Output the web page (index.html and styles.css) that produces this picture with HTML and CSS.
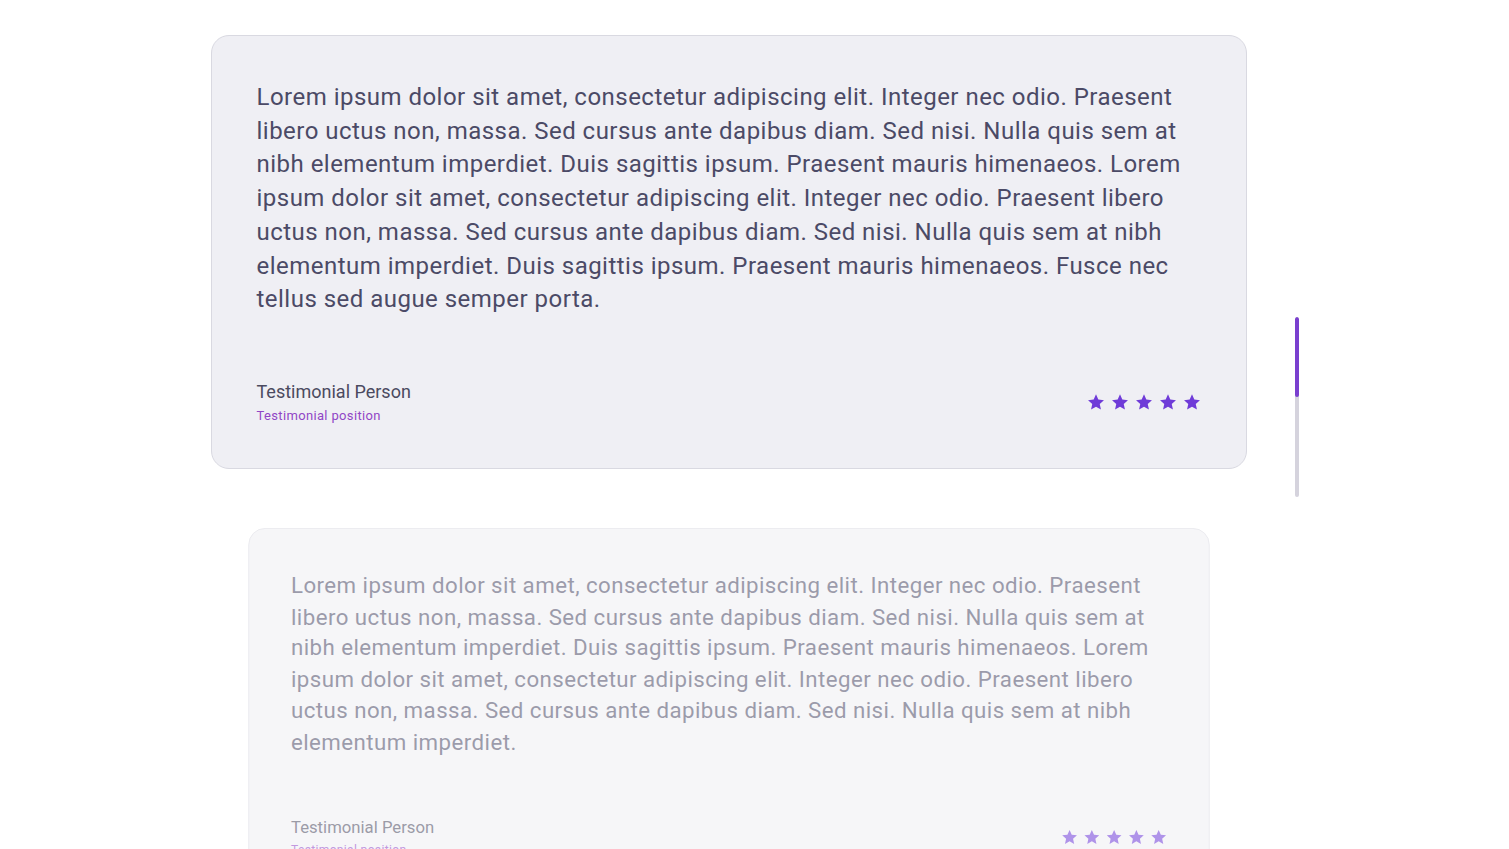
FILE: index.html
```html
<!doctype html>
<html lang="en">
<head>
  <meta charset="UTF-8">
  <meta name="viewport" content="width=device-width, initial-scale=1.0">
  <title>Testimonials</title>
  <link rel="stylesheet" href="styles.css">
</head>
<body>
  <svg width="0" height="0" class="defs">
    <symbol id="star" viewBox="0 0 24 24">
      <path d="M12 1.8l3.1 6.9 7.5.8-5.6 5.1 1.6 7.4L12 18.2 5.4 22l1.6-7.4-5.6-5.1 7.5-.8z"/>
    </symbol>
  </svg>

  <div class="testimonials">
    <div class="slides">
      <div class="card active">
        <p class="quote">Lorem ipsum dolor sit amet, consectetur adipiscing elit. Integer nec odio. Praesent libero uctus non, massa. Sed cursus ante dapibus diam. Sed nisi. Nulla quis sem at nibh elementum imperdiet. Duis sagittis ipsum. Praesent mauris himenaeos. Lorem ipsum dolor sit amet, consectetur adipiscing elit. Integer nec odio. Praesent libero uctus non, massa. Sed cursus ante dapibus diam. Sed nisi. Nulla quis sem at nibh elementum imperdiet. Duis sagittis ipsum. Praesent mauris himenaeos. Fusce nec tellus sed augue semper porta.</p>
        <div class="card-foot">
          <div class="person">
            <div class="name">Testimonial Person</div>
            <div class="position">Testimonial position</div>
          </div>
          <div class="stars">
            <svg><use href="#star"/></svg>
            <svg><use href="#star"/></svg>
            <svg><use href="#star"/></svg>
            <svg><use href="#star"/></svg>
            <svg><use href="#star"/></svg>
          </div>
        </div>
      </div>

      <div class="card next">
        <p class="quote">Lorem ipsum dolor sit amet, consectetur adipiscing elit. Integer nec odio. Praesent libero uctus non, massa. Sed cursus ante dapibus diam. Sed nisi. Nulla quis sem at nibh elementum imperdiet. Duis sagittis ipsum. Praesent mauris himenaeos. Lorem ipsum dolor sit amet, consectetur adipiscing elit. Integer nec odio. Praesent libero uctus non, massa. Sed cursus ante dapibus diam. Sed nisi. Nulla quis sem at nibh elementum imperdiet.</p>
        <div class="card-foot">
          <div class="person">
            <div class="name">Testimonial Person</div>
            <div class="position">Testimonial position</div>
          </div>
          <div class="stars">
            <svg><use href="#star"/></svg>
            <svg><use href="#star"/></svg>
            <svg><use href="#star"/></svg>
            <svg><use href="#star"/></svg>
            <svg><use href="#star"/></svg>
          </div>
        </div>
      </div>
    </div>

    <div class="progress">
      <div class="progress-bar"></div>
    </div>
  </div>
</body>
</html>
```

FILE: styles.css
```css
* {
  margin: 0;
  padding: 0;
  box-sizing: border-box;
}
html, body {
  height: 100%;
  overflow: hidden;
}
body {
  background-color: #fff;
  font-family: Roboto, "Liberation Sans", sans-serif;
  color: #4b4a66;
}
.defs {
  position: absolute;
}
.testimonials {
  display: flex;
  justify-content: center;
  align-items: flex-start;
  gap: 48px;
  padding-top: 35px;
}
.slides {
  width: 1036px;
}
.card {
  background-color: #efeff4;
  border: 1px solid #d9d9e1;
  border-radius: 18px;
  padding: 45px 45px 43px;
}
.card.next {
  margin-top: 59px;
  transform: scale(.928);
  transform-origin: top center;
  opacity: .55;
}
.quote {
  font-size: 24px;
  line-height: 33.7px;
  letter-spacing: .48px;
}
.card-foot {
  display: flex;
  justify-content: space-between;
  align-items: center;
  margin-top: 62px;
}
.name {
  font-size: 18px;
  line-height: 25px;
  color: #4b4a5f;
}
.position {
  margin-top: 3px;
  font-size: 13px;
  line-height: 18px;
  letter-spacing: .35px;
  color: #9146c6;
}
.stars {
  display: flex;
  gap: 6px;
  color: #6f3bd8;
}
.stars svg {
  width: 18px;
  height: 18px;
  fill: currentColor;
}
.progress {
  width: 4px;
  height: 180px;
  margin-top: 282px;
  border-radius: 2px;
  background-color: #d5d3dd;
  overflow: hidden;
}
.progress-bar {
  height: 80px;
  border-radius: 2px;
  background-color: #7a3fcf;
}
```
